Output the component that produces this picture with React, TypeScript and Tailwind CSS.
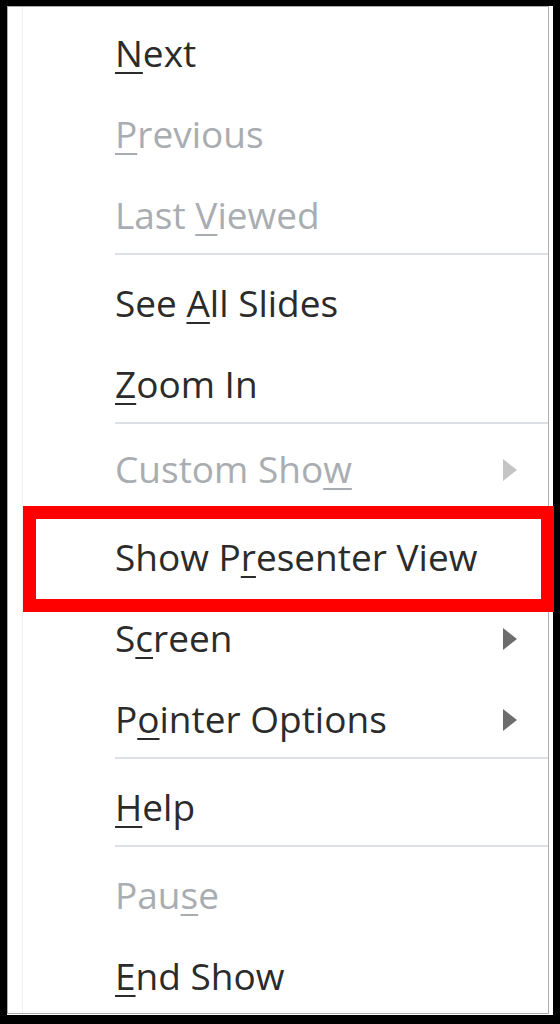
import { Fragment } from "react";

type Item = {
  label: string;
  key: number; // index of the mnemonic letter
  disabled?: boolean;
  submenu?: boolean;
  h?: string;
  pt?: string;
};

const groups: Item[][] = [
  [
    { label: "Next", key: 0 },
    { label: "Previous", key: 0, disabled: true },
    { label: "Last Viewed", key: 5, disabled: true },
  ],
  [
    { label: "See All Slides", key: 4 },
    { label: "Zoom In", key: 0 },
  ],
  [
    { label: "Custom Show", key: 10, disabled: true, submenu: true, h: "h-[85px]", pt: "pt-[24px]" },
    { label: "Show Presenter View", key: 6 },
    { label: "Screen", key: 1, submenu: true },
    { label: "Pointer Options", key: 1, submenu: true },
  ],
  [{ label: "Help", key: 0 }],
  [
    { label: "Pause", key: 3, disabled: true },
    { label: "End Show", key: 0 },
  ],
];

const Arrow = ({ disabled }: { disabled?: boolean }) => (
  <svg width="14" height="22" viewBox="0 0 14 22" className="mt-[9px]">
    <path d="M0 0 L14 11 L0 22 Z" fill={disabled ? "#c4c4c4" : "#6d6d6d"} />
  </svg>
);

const Row = ({ item }: { item: Item }) => {
  const { label, key } = item;
  return (
    <div
      className={`flex items-start justify-between pl-[92px] pr-[31px] ${item.h ?? "h-[81px]"} ${item.pt ?? "pt-[27px]"}`}
    >
      <span
        className={`text-[37px] leading-none whitespace-nowrap ${
          item.disabled ? "text-[#a9adb1]" : "text-[#2b2b2b]"
        }`}
      >
        {label.slice(0, key)}
        <span className="underline decoration-[2px] underline-offset-[5px]">
          {label[key]}
        </span>
        {label.slice(key + 1)}
      </span>
      {item.submenu && <Arrow disabled={item.disabled} />}
    </div>
  );
};

export default function App() {
  return (
    <div
      className="relative w-[560px] h-[1024px] bg-black pt-[6px] pl-[7px] pr-[7px] pb-[9px] flex"
      style={{ fontFamily: '"Open Sans", "Noto Sans", sans-serif' }}
    >
      <div className="flex-1 bg-white pr-[4px] pb-[1px] flex">
        <div className="flex-1 border border-[#acacac] flex">
          <div className="w-[15px] border-r border-[#f0f0f0]" />
          <div className="flex-1 flex flex-col">
            {groups.map((g, gi) => (
              <Fragment key={gi}>
                {gi > 0 && (
                  <div className="h-[7px] flex items-center pl-[92px]">
                    <div className="flex-1 h-[2px] bg-[#dde1e5]" />
                  </div>
                )}
                {g.map((item) => (
                  <Row key={item.label} item={item} />
                ))}
              </Fragment>
            ))}
          </div>
        </div>
      </div>
      {/* red highlight around Show Presenter View */}
      <div className="absolute left-[23px] top-[506px] w-[531px] h-[106px] border-[13px] border-[#fe0000]" />
    </div>
  );
}
